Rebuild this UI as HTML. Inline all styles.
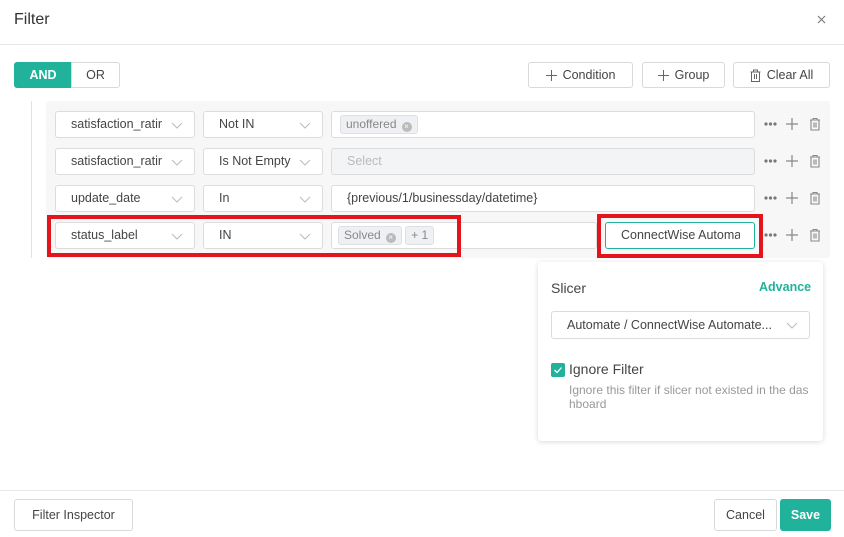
<!DOCTYPE html><html><head><style>
*{box-sizing:border-box;margin:0;padding:0}
body{width:844px;height:537px;background:#fff;font-family:"Liberation Sans",sans-serif;color:#333;position:relative;overflow:hidden;font-size:13px}
.a{position:absolute}
.btn{position:absolute;border:1px solid #d9d9d9;border-radius:3px;background:#fff;display:flex;align-items:center;justify-content:center;font-size:12.5px;color:#444}
.sel{position:absolute;height:27px;border:1px solid #dcdcdc;border-radius:3px;background:#fff;font-size:12.5px;color:#444;padding-left:15px;line-height:25px;white-space:nowrap;overflow:hidden}
.chev{position:absolute;right:11px;top:10px}
.tag{display:inline-block;background:#eef0f3;border:1px solid #dde0e4;border-radius:3px;font-size:12px;color:#888;height:19px;line-height:17px;padding:0 5px;vertical-align:middle}
.x{display:inline-block;width:10px;height:10px;border-radius:50%;background:#bbb;margin-left:5px;vertical-align:-1px;color:#fff;font-size:8px;line-height:10px;text-align:center}
.red{position:absolute;border:4px solid #e3141c}
.ops{position:absolute;left:763px}
</style></head><body>
<svg width="0" height="0" style="position:absolute"><defs>
<symbol id="ch" viewBox="0 0 12 7"><path d="M1 1l5 5 5-5" fill="none" stroke="#bbb" stroke-width="1"/></symbol>
<symbol id="op" viewBox="0 0 66 16"><circle cx="3" cy="8" r="1.6" fill="#777"/><circle cx="7.5" cy="8" r="1.6" fill="#777"/><circle cx="12" cy="8" r="1.6" fill="#777"/><path d="M29 2v12M23 8h12" stroke="#888" stroke-width="1.2"/><path d="M47 4h10M50 4V2.5h4V4M48 4v10h8V4M51 6.5v5M53 6.5v5" fill="none" stroke="#888" stroke-width="1.1"/></symbol>
</defs></svg>
<div class="a" style="left:14px;top:11px;font-size:16px;color:#333">Filter</div>
<svg class="a" style="left:817px;top:15px" width="9" height="9"><path d="M1 1l7 7M8 1l-7 7" stroke="#777" stroke-width="1.1"/></svg>
<div class="a" style="left:0;top:44px;width:844px;height:1px;background:#e8e8e8"></div>

<div class="btn" style="left:14px;top:62px;width:58px;height:26px;background:#21b29c;border-color:#21b29c;color:#fff;font-weight:bold;border-radius:3px 0 0 3px">AND</div>
<div class="btn" style="left:71px;top:62px;width:49px;height:26px;border-radius:0 3px 3px 0">OR</div>
<div class="btn" style="left:528px;top:62px;width:105px;height:26px"><svg width="11" height="11" style="margin-right:6px"><path d="M5.5 0v11M0 5.5h11" stroke="#666"/></svg>Condition</div>
<div class="btn" style="left:642px;top:62px;width:83px;height:26px"><svg width="11" height="11" style="margin-right:6px"><path d="M5.5 0v11M0 5.5h11" stroke="#666"/></svg>Group</div>
<div class="btn" style="left:733px;top:62px;width:97px;height:26px"><svg width="11" height="13" style="margin-right:6px"><path d="M0.5 3h10M3.5 3V1h4v2M1.5 3v9.5h8V3M4.5 5v5M6.5 5v5" fill="none" stroke="#666"/></svg>Clear All</div>

<div class="a" style="left:31px;top:101px;width:1px;height:157px;background:#e2e2e2"></div>
<div class="a" style="left:46px;top:101px;width:784px;height:157px;background:#f7f7f8;border-radius:3px"></div>

<div class="sel" style="left:55px;top:111px;width:140px">satisfaction_ratir<svg class="chev" width="12" height="7"><use href="#ch"/></svg></div>
<div class="sel" style="left:203px;top:111px;width:120px">Not IN<svg class="chev" width="12" height="7"><use href="#ch"/></svg></div>
<div class="sel" style="left:331px;top:111px;width:424px;padding-left:8px"><span class="tag">unoffered<span class="x">×</span></span></div>

<div class="sel" style="left:55px;top:148px;width:140px">satisfaction_ratir<svg class="chev" width="12" height="7"><use href="#ch"/></svg></div>
<div class="sel" style="left:203px;top:148px;width:120px">Is Not Empty<svg class="chev" width="12" height="7"><use href="#ch"/></svg></div>
<div class="sel" style="left:331px;top:148px;width:424px;background:#f3f4f6;color:#bbb">Select</div>

<div class="sel" style="left:55px;top:185px;width:140px">update_date<svg class="chev" width="12" height="7"><use href="#ch"/></svg></div>
<div class="sel" style="left:203px;top:185px;width:120px">In<svg class="chev" width="12" height="7"><use href="#ch"/></svg></div>
<div class="sel" style="left:331px;top:185px;width:424px">{previous/1/businessday/datetime}</div>

<div class="sel" style="left:55px;top:222px;width:140px">status_label<svg class="chev" width="12" height="7"><use href="#ch"/></svg></div>
<div class="sel" style="left:203px;top:222px;width:120px">IN<svg class="chev" width="12" height="7"><use href="#ch"/></svg></div>
<div class="sel" style="left:331px;top:222px;width:266px;padding-left:6px"><span class="tag">Solved<span class="x">×</span></span> <span class="tag">+ 1</span></div>
<div class="sel" style="left:605px;top:222px;width:150px;border-color:#21b29c;padding-left:15px;padding-right:14px;text-overflow:clip"><span style="display:block;overflow:hidden">ConnectWise Automate</span></div>

<svg class="ops" style="top:116px" width="66" height="16"><use href="#op"/></svg>
<svg class="ops" style="top:153px" width="66" height="16"><use href="#op"/></svg>
<svg class="ops" style="top:190px" width="66" height="16"><use href="#op"/></svg>
<svg class="ops" style="top:227px" width="66" height="16"><use href="#op"/></svg>

<div class="red" style="left:47px;top:215px;width:414px;height:42px"></div>
<div class="red" style="left:597px;top:214px;width:166px;height:44px"></div>

<div class="a" style="left:538px;top:262px;width:285px;height:179px;background:#fff;border-radius:4px;box-shadow:0 1px 6px rgba(0,0,0,.15)">
 <div class="a" style="left:13px;top:18px;font-size:14px;color:#444">Slicer</div>
 <div class="a" style="left:221px;top:18px;font-size:12.5px;color:#21b29c;font-weight:bold">Advance</div>
 <div class="sel" style="left:13px;top:49px;width:259px;height:28px;padding-left:15px;line-height:26px">Automate / ConnectWise Automate...<svg class="chev" width="12" height="7"><use href="#ch"/></svg></div>
 <div class="a" style="left:13px;top:101px;width:14px;height:14px;background:#21b29c;border-radius:2px"><svg width="14" height="14"><path d="M3.5 7l2.5 2.5 4.5-5" fill="none" stroke="#fff" stroke-width="1.3"/></svg></div>
 <div class="a" style="left:31px;top:99px;font-size:14px;color:#444">Ignore Filter</div>
 <div class="a" style="left:31px;top:121px;width:245px;font-size:12px;color:#999;line-height:14px;word-break:break-all">Ignore this filter if slicer not existed in the dashboard</div>
</div>

<div class="a" style="left:0;top:490px;width:844px;height:1px;background:#e8e8e8"></div>
<div class="btn" style="left:14px;top:499px;width:119px;height:32px">Filter Inspector</div>
<div class="btn" style="left:714px;top:499px;width:63px;height:32px">Cancel</div>
<div class="btn" style="left:780px;top:499px;width:51px;height:32px;background:#21b29c;border-color:#21b29c;color:#fff;font-weight:bold">Save</div>
</body></html>
